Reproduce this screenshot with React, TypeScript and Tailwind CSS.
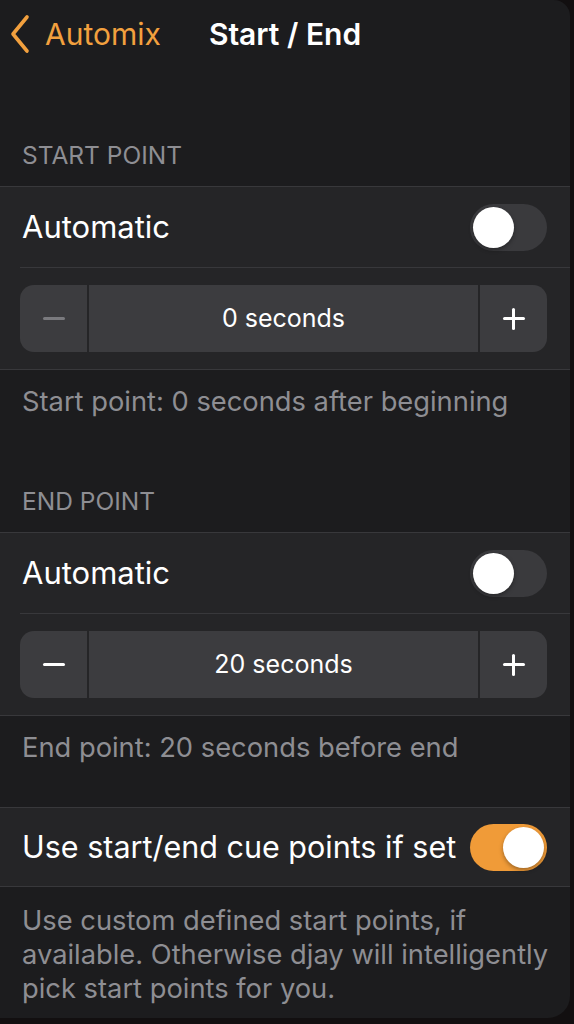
import React from "react";

type ToggleProps = { on?: boolean };

function Toggle({ on = false }: ToggleProps) {
  return (
    <div
      className={`flex h-[47px] w-[77px] shrink-0 items-center rounded-full p-[3px] ${
        on ? "justify-end bg-[#f09b38]" : "justify-start bg-[#3a3a3d]"
      }`}
    >
      <div className="h-[41px] w-[41px] rounded-full bg-white shadow-[0_2px_4px_rgba(0,0,0,0.35)]" />
    </div>
  );
}

type StepperProps = { label: string; minusDisabled?: boolean };

function Stepper({ label, minusDisabled = false }: StepperProps) {
  return (
    <div className="flex h-[67px] overflow-hidden rounded-[14px] bg-[#3c3c3f]">
      <div className="flex w-[67px] items-center justify-center">
        <div
          className={`h-[3px] w-[22px] rounded-full ${
            minusDisabled ? "bg-[#7a7a7e]" : "bg-white"
          }`}
        />
      </div>
      <div className="w-[2px] bg-[#252527]" />
      <div className="flex flex-1 items-center justify-center text-[25px] text-white">
        {label}
      </div>
      <div className="w-[2px] bg-[#252527]" />
      <div className="relative flex w-[67px] items-center justify-center">
        <div className="h-[3px] w-[22px] rounded-full bg-white" />
        <div className="absolute h-[22px] w-[3px] rounded-full bg-white" />
      </div>
    </div>
  );
}

type SectionProps = {
  title: string;
  value: string;
  minusDisabled?: boolean;
  footer: string;
  footerHeight: string;
};

function Section({ title, value, minusDisabled, footer, footerHeight }: SectionProps) {
  return (
    <>
      <div className="flex h-[62px] items-end px-[22px] pb-[16px] text-[24.5px] leading-[30px] text-[#8e8e93]">
        {title}
      </div>
      <div className="border-y border-[#38383b] bg-[#252527]">
        <div className="flex h-[80px] items-center justify-between pl-[22px] pr-[23px]">
          <span className="text-[31px] text-white">Automatic</span>
          <Toggle />
        </div>
        <div className="ml-[20px] border-t border-[#38383b] py-[17px] pr-[23px]">
          <Stepper label={value} minusDisabled={minusDisabled} />
        </div>
      </div>
      <div
        className={`px-[22px] pt-[17px] text-[27.3px] leading-[30px] text-[#8e8e93] ${footerHeight}`}
      >
        {footer}
      </div>
    </>
  );
}

export default function App() {
  return (
    <div
      className="flex h-[1024px] w-[574px] bg-[#120f10]"
      style={{ fontFamily: "Inter, 'Noto Sans', sans-serif" }}
    >
      <div className="flex h-[1018px] w-[570px] flex-col overflow-hidden rounded-tr-[16px] rounded-br-[22px] bg-[#1c1c1e]">
        <div className="flex h-[68px] items-center">
          <svg width="40" height="40" viewBox="0 0 40 40" className="ml-[4px]">
            <path
              d="M23 3 L9 20 L23 37"
              fill="none"
              stroke="#f2a03e"
              strokeWidth="3.6"
              strokeLinecap="round"
              strokeLinejoin="round"
            />
          </svg>
          <span className="ml-[1px] text-[30px] text-[#f2a03e]">Automix</span>
          <span className="ml-[48px] text-[30px] font-semibold text-white">Start / End</span>
        </div>
        <div className="h-[56px]" />
        <Section
          title="START POINT"
          value="0 seconds"
          minusDisabled
          footer="Start point: 0 seconds after beginning"
          footerHeight="h-[100px]"
        />
        <Section
          title="END POINT"
          value="20 seconds"
          footer="End point: 20 seconds before end"
          footerHeight="h-[91px]"
        />
        <div className="flex h-[80px] items-center justify-between border-y border-[#38383b] bg-[#252527] pl-[22px] pr-[23px]">
          <span className="text-[30.5px] text-white">Use start/end cue points if set</span>
          <Toggle on />
        </div>
        <div className="whitespace-nowrap px-[22px] pt-[17px] text-[27.3px] leading-[34px] text-[#8e8e93]">
          Use custom defined start points, if
          <br />
          available. Otherwise djay will intelligently
          <br />
          pick start points for you.
        </div>
      </div>
    </div>
  );
}
